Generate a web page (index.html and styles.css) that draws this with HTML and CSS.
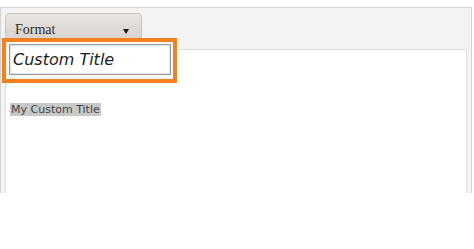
FILE: index.html
```html
<!DOCTYPE html>
<html>
<head>
<meta charset="utf-8">
<link rel="stylesheet" href="styles.css">
</head>
<body>
<div class="editor">
  <div class="toolbar">
    <div class="format-btn">
      <span class="format-label">Format</span>
      <span class="caret"></span>
    </div>
  </div>
  <div class="content">
    <span class="selected">My Custom Title</span>
  </div>
  <div class="highlight">
    <div class="title-input">Custom Title</div>
  </div>
</div>
</body>
</html>
```

FILE: styles.css
```css
html, body {
  margin: 0;
  padding: 0;
  background: #ffffff;
}

.editor {
  position: relative;
  margin-top: 7px;
  width: 472px;
  height: 186px;
  box-sizing: border-box;
  border: 1px solid #d4d4d4;
  border-bottom: none;
  background: #f4f3f3;
  display: flex;
  flex-direction: column;
}

.toolbar {
  height: 41px;
  box-sizing: border-box;
  padding: 5px 0 0 4px;
  flex: none;
  overflow: hidden;
}

.format-btn {
  width: 137px;
  height: 34px;
  box-sizing: border-box;
  border: 1px solid #c9c5c1;
  border-radius: 4px 4px 0 0;
  background: linear-gradient(#e8e5e2, #d3cec9);
  display: flex;
  align-items: flex-start;
  justify-content: space-between;
  padding: 8px 12px 0 9px;
}

.format-label {
  font-family: "Liberation Serif", "Times New Roman", serif;
  font-size: 14px;
  color: #2e2e2e;
  line-height: 16px;
}

.caret {
  margin-top: 7px;
  width: 0;
  height: 0;
  border-left: 3.5px solid transparent;
  border-right: 3.5px solid transparent;
  border-top: 5px solid #1a1a1a;
}

.content {
  flex: 1;
  margin: 0 4px;
  background: #ffffff;
  border: 1px solid #dcdcdc;
  border-bottom: none;
  padding: 51px 0 0 4px;
  line-height: 14px;
}

.selected {
  font-family: "DejaVu Sans", Verdana, sans-serif;
  font-size: 11px;
  color: #444444;
  background: #c8c8c8;
  padding: 0 1px;
}

.highlight {
  position: absolute;
  left: 1px;
  top: 30px;
  width: 175px;
  height: 45px;
  box-sizing: border-box;
  border: 4px solid #f5801f;
  background: #f9f9f9;
  padding: 2px 0 0 3px;
}

.title-input {
  width: 162px;
  height: 31px;
  box-sizing: border-box;
  border: 1px solid #9a9a9a;
  box-shadow: inset 0 0 0 1px #e2e2e2;
  background: #ffffff;
  font-family: "DejaVu Sans", Verdana, sans-serif;
  font-style: italic;
  font-size: 16px;
  line-height: 29px;
  color: #1e1e1e;
  padding-left: 3px;
}
```
